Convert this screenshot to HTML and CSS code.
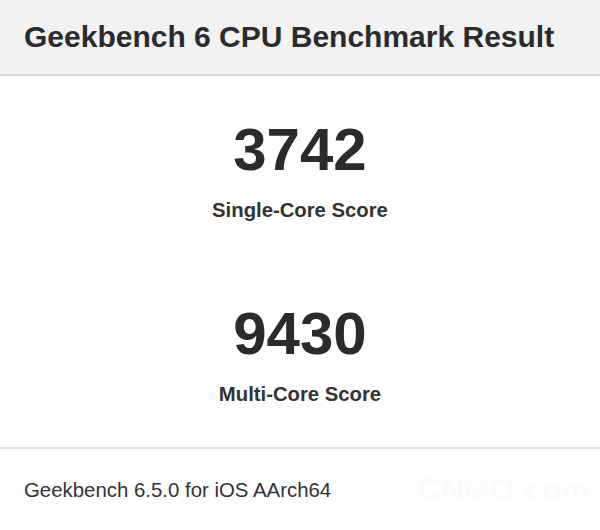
FILE: index.html
```html
<!DOCTYPE html>
<html>
<head>
<meta charset="utf-8">
<link rel="stylesheet" href="styles.css">
</head>
<body>
<div class="page">
  <header class="header">
    <h1 class="title">Geekbench 6 CPU Benchmark Result</h1>
  </header>
  <main class="scores">
    <section class="score">
      <div class="value">3742</div>
      <div class="label">Single-Core Score</div>
    </section>
    <section class="score">
      <div class="value">9430</div>
      <div class="label">Multi-Core Score</div>
    </section>
  </main>
  <footer class="footer">
    <span class="version">Geekbench 6.5.0 for iOS AArch64</span>
    <span class="watermark">CNMO.com</span>
  </footer>
</div>
</body>
</html>
```

FILE: styles.css
```css
html, body {
  margin: 0;
  padding: 0;
  background: #fefefe;
}
body {
  font-family: "Liberation Sans", Arial, sans-serif;
  color: #2b2b2e;
}
.page {
  width: 600px;
  height: 530px;
  display: flex;
  flex-direction: column;
}
.header {
  height: 74px;
  background: #f2f2f2;
  border-bottom: 2px solid #d6d6d6;
  display: flex;
  align-items: center;
  padding-left: 24px;
  box-sizing: content-box;
}
.title {
  margin: 0;
  font-size: 30px;
  font-weight: bold;
  letter-spacing: 0;
}
.scores {
  height: 373px;
  border-bottom: 2px solid #e2e2e2;
  display: flex;
  flex-direction: column;
  align-items: center;
  padding-top: 42px;
  box-sizing: border-box;
  gap: 81px;
}
.score {
  display: flex;
  flex-direction: column;
  align-items: center;
}
.value {
  font-size: 60px;
  font-weight: bold;
  line-height: 64px;
}
.label {
  margin-top: 17px;
  font-size: 20.3px;
  font-weight: bold;
  line-height: 22px;
  color: #333336;
}
.footer {
  flex: 1;
  display: flex;
  align-items: center;
  justify-content: space-between;
  padding: 0 24px 0 24px;
}
.version {
  font-size: 20.4px;
  color: #333336;
  margin-top: 2px;
}
.watermark {
  font-size: 32px;
  font-weight: bold;
  color: #fbfbfb;
  margin-right: -14px;
}
```
